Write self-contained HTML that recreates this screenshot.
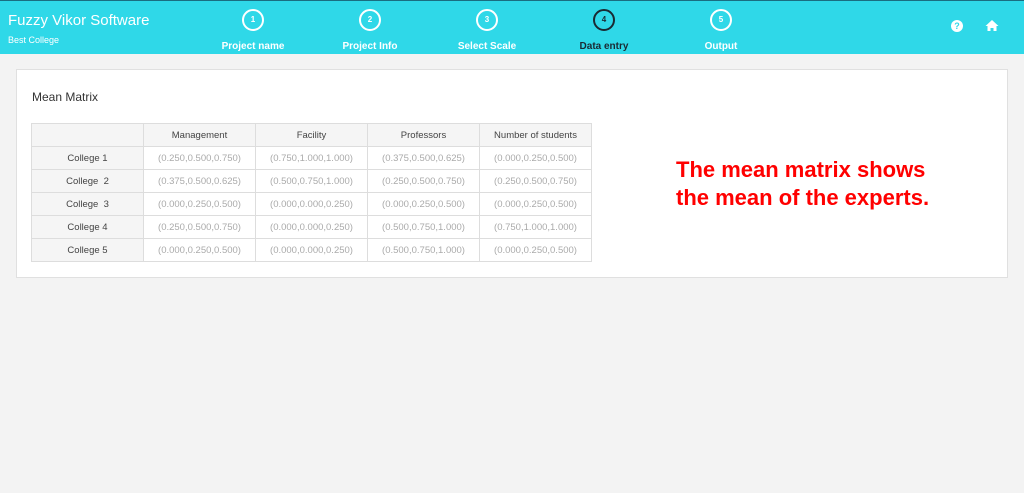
<!DOCTYPE html>
<html><head><style>
body{margin:0;width:1024px;height:493px;background:#f3f3f3;font-family:"Liberation Sans",Arial,sans-serif;position:relative;overflow:hidden}
.hdr{position:absolute;left:0;top:0;width:1024px;height:54px;background:#2fd8e8;border-top:1px solid #1a6d80;box-sizing:border-box}
.t{position:absolute;left:8px;top:11px;color:#fff;font-size:15px}
.s{position:absolute;left:8px;top:34px;color:#fff;font-size:9px}
.st{position:absolute;top:8px;width:120px;text-align:center;color:#fff;font-size:10px;font-weight:bold}
.c{width:18px;height:18px;border:2px solid #fff;border-radius:50%;margin:0 auto 10px;font-size:8px;line-height:18px}
.st.a{color:#1a2a33}.st.a .c{border-color:#1a2a33}
.card{position:absolute;left:16px;top:69px;width:992px;height:209px;background:#fff;border:1px solid #e0e0e0;box-sizing:border-box}
h3{position:absolute;left:15px;top:20px;margin:0;font-weight:normal;font-size:12px;color:#333}
table{position:absolute;left:14px;top:53px;border-collapse:collapse;font-size:9.5px}
td{border:1px solid #ddd;height:22px;text-align:center;color:#aaa;width:111px;padding:0}
td.h{background:#f5f5f5;color:#444}
.red{position:absolute;left:676px;top:156px;color:#f00;font-weight:bold;font-size:22px;line-height:28px}
</style></head><body>
<div class="hdr">
<div class="t">Fuzzy Vikor Software</div><div class="s">Best College</div>
<div class="st" style="left:193px"><div class="c">1</div>Project name</div>
<div class="st" style="left:310px"><div class="c">2</div>Project Info</div>
<div class="st" style="left:427px"><div class="c">3</div>Select Scale</div>
<div class="st a" style="left:544px"><div class="c">4</div>Data entry</div>
<div class="st" style="left:661px"><div class="c">5</div>Output</div>
<div style="position:absolute;left:951px;top:19px;width:12px;height:12px;border-radius:50%;background:#fff;color:#2fd8e8;font-size:9px;font-weight:bold;text-align:center;line-height:12px">?</div>
<svg style="position:absolute;left:985px;top:18px" width="14" height="13" viewBox="0 0 14 13"><path d="M7 1L0.5 7H2.5V12H5.5V9H8.5V12H11.5V7H13.5Z" fill="#fff"/></svg>
</div>
<div class="card"><h3>Mean Matrix</h3>
<table>
<tr><td class="h"></td><td class="h">Management</td><td class="h">Facility</td><td class="h">Professors</td><td class="h">Number of students</td></tr>
<tr><td class="h">College 1</td><td>(0.250,0.500,0.750)</td><td>(0.750,1.000,1.000)</td><td>(0.375,0.500,0.625)</td><td>(0.000,0.250,0.500)</td></tr>
<tr><td class="h">College &nbsp;2</td><td>(0.375,0.500,0.625)</td><td>(0.500,0.750,1.000)</td><td>(0.250,0.500,0.750)</td><td>(0.250,0.500,0.750)</td></tr>
<tr><td class="h">College &nbsp;3</td><td>(0.000,0.250,0.500)</td><td>(0.000,0.000,0.250)</td><td>(0.000,0.250,0.500)</td><td>(0.000,0.250,0.500)</td></tr>
<tr><td class="h">College 4</td><td>(0.250,0.500,0.750)</td><td>(0.000,0.000,0.250)</td><td>(0.500,0.750,1.000)</td><td>(0.750,1.000,1.000)</td></tr>
<tr><td class="h">College 5</td><td>(0.000,0.250,0.500)</td><td>(0.000,0.000,0.250)</td><td>(0.500,0.750,1.000)</td><td>(0.000,0.250,0.500)</td></tr>
</table></div>
<div class="red">The mean matrix shows<br>the mean of the experts.</div>
</body></html>
